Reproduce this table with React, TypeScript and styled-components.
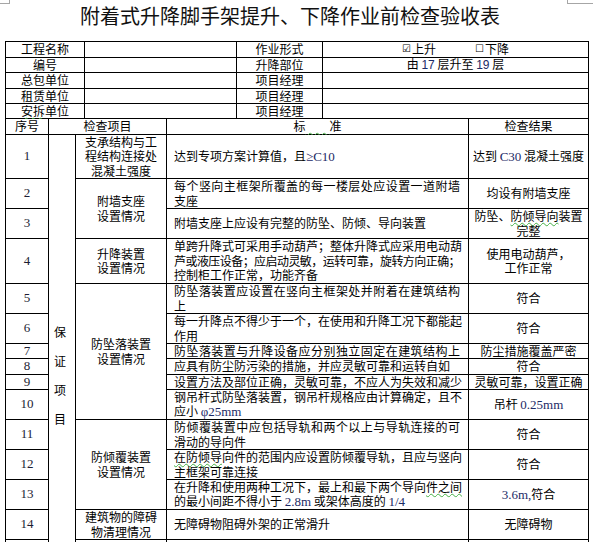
import React from 'react';
import styled, { createGlobalStyle } from 'styled-components';

const GlobalStyle = createGlobalStyle`
  html, body {
    margin: 0;
    padding: 0;
    overflow: hidden;
    background: #ffffff;
  }
  body {
    font-family: "Noto Sans CJK SC", "Noto Sans", sans-serif;
    color: #000000;
  }
`;

const Page = styled.div`
  position: relative;
  width: 593px;
  height: 542px;
  overflow: hidden;
  padding-left: 5px;
  box-sizing: border-box;
`;

const CornerMark = styled.div<{ $side: 'left' | 'right' }>`
  position: absolute;
  top: 0;
  ${(p) => (p.$side === 'left' ? 'left: 0; width: 9px; border-right: 1px solid #a6a6a6;' : 'left: 567px; width: 26px; border-left: 1px solid #a6a6a6;')}
  height: 3px;
  border-bottom: 1px solid #a6a6a6;
`;

const Title = styled.h1`
  margin: 0;
  height: 41px;
  box-sizing: border-box;
  padding: 6px 18px 0 0;
  font-size: 20px;
  line-height: 20px;
  font-weight: 400;
  text-align: center;
  color: #111111;
  white-space: nowrap;
`;

const Sheet = styled.div`
  display: grid;
  width: 584px;
  box-sizing: border-box;
  grid-template-columns: 42px 26px 8px 81px 69px 85px 145px 119px;
  grid-template-rows:
    15px 14px 15px 14px 14px 15px
    43px 29px 29px 44px 29px 29px 14px 15px 14px 29px 29px 29px 29px 29px 29px;
  gap: 1px;
  padding: 1px;
  background: #000000;
  font-size: 12px;
  line-height: 14.5px;
`;

const Cell = styled.div<{ $col: string; $row: string }>`
  grid-column: ${(p) => p.$col};
  grid-row: ${(p) => p.$row};
  background: #ffffff;
  display: flex;
  flex-direction: column;
  justify-content: center;
  align-items: center;
  text-align: center;
  white-space: nowrap;
  min-width: 0;
  min-height: 0;
`;

const StdCell = styled(Cell)`
  align-items: flex-start;
  text-align: left;
  padding-left: 7px;
`;

const NumCell = styled(Cell)`
  font-family: "Liberation Serif", "Times New Roman", serif;
  font-size: 13px;
  color: #1b1d33;
`;

const GroupCell = styled(Cell)`
  justify-content: flex-start;
  padding-top: 182px;
  padding-right: 4px;
  line-height: 29px;
`;

const Line = styled.span<{ $justify?: boolean; $tight?: boolean }>`
  display: block;
  ${(p) =>
    p.$justify
      ? 'width: 286px; text-align: justify; text-align-last: justify; text-justify: inter-character;'
      : ''}
  ${(p) => (p.$tight ? 'letter-spacing: -0.6px;' : '')}
`;

const Latin = styled.span<{ $serif?: boolean }>`
  font-family: ${(p) =>
    p.$serif ? '"Liberation Serif", "Times New Roman", serif' : '"Liberation Sans", Arial, sans-serif'};
  font-size: ${(p) => (p.$serif ? '13px' : '12px')};
  color: #1c2a66;
`;

const Squiggle = styled.span`
  text-decoration: underline wavy #46b046;
  text-decoration-thickness: 1px;
  text-underline-offset: 1px;
  white-space: pre;
`;

const ChoiceRow = styled.div`
  display: flex;
  gap: 39px;
`;

const Choice = styled.span`
  display: inline-flex;
  align-items: center;
`;

const Box = styled.span`
  font-family: "DejaVu Sans", sans-serif;
  font-size: 10px;
  margin-right: 1px;
`;

type HeaderRow = { label: React.ReactNode; label2: string; value2?: React.ReactNode };

const headerRows: HeaderRow[] = [
  {
    label: '工程名称',
    label2: '作业形式',
    value2: (
      <ChoiceRow>
        <Choice>
          <Box>☑</Box>上升
        </Choice>
        <Choice>
          <Box>☐</Box>下降
        </Choice>
      </ChoiceRow>
    ),
  },
  {
    label: '编号',
    label2: '升降部位',
    value2: (
      <span>
        由 <Latin>17</Latin> 层升至 <Latin>19</Latin> 层
      </span>
    ),
  },
  { label: '总包单位', label2: '项目经理' },
  { label: '租赁单位', label2: '项目经理' },
  {
    label: (
      <span>
        <Squiggle>安拆</Squiggle>单位
      </span>
    ),
    label2: '项目经理',
  },
];

type BodyRow = { n: string; std: React.ReactNode; res: React.ReactNode };

const bodyRows: BodyRow[] = [
  {
    n: '1',
    std: (
      <Line>
        达到专项方案计算值，且<Latin $serif>≥C10</Latin>
      </Line>
    ),
    res: (
      <span>
        达到 <Latin $serif>C30</Latin> 混凝土强度
      </span>
    ),
  },
  {
    n: '2',
    std: (
      <>
        <Line $justify>每个竖向主框架所覆盖的每一楼层处应设置一道附墙</Line>
        <Line>支座</Line>
      </>
    ),
    res: '均设有附墙支座',
  },
  {
    n: '3',
    std: <Line>附墙支座上应设有完整的防坠、防倾、导向装置</Line>,
    res: (
      <>
        <Line>
          防坠、<Squiggle>防倾导向</Squiggle>装置
        </Line>
        <Line>完整</Line>
      </>
    ),
  },
  {
    n: '4',
    std: (
      <>
        <Line $justify>单跨升降式可采用手动葫芦；整体升降式应采用电动葫</Line>
        <Line $justify $tight>
          芦或液压设备；应启动灵敏，运转可靠，旋转方向正确；
        </Line>
        <Line>控制柜工作正常，功能齐备</Line>
      </>
    ),
    res: (
      <>
        <Line>使用电动葫芦，</Line>
        <Line>工作正常</Line>
      </>
    ),
  },
  {
    n: '5',
    std: (
      <>
        <Line $justify>防坠落装置应设置在竖向主框架处并附着在建筑结构</Line>
        <Line>上</Line>
      </>
    ),
    res: '符合',
  },
  {
    n: '6',
    std: (
      <>
        <Line $justify>每一升降点不得少于一个，在使用和升降工况下都能起</Line>
        <Line>作用</Line>
      </>
    ),
    res: '符合',
  },
  {
    n: '7',
    std: <Line $justify>防坠落装置与升降设备应分别独立固定在建筑结构上</Line>,
    res: '防尘措施覆盖严密',
  },
  {
    n: '8',
    std: <Line>应具有防尘防污染的措施，并应灵敏可靠和运转自如</Line>,
    res: '符合',
  },
  {
    n: '9',
    std: <Line>设置方法及部位正确，灵敏可靠，不应人为失效和减少</Line>,
    res: '灵敏可靠，设置正确',
  },
  {
    n: '10',
    std: (
      <>
        <Line $justify>钢吊杆式防坠落装置，钢吊杆规格应由计算确定，且不</Line>
        <Line>
          应小 <Latin $serif>φ25mm</Latin>
        </Line>
      </>
    ),
    res: (
      <span>
        吊杆 <Latin $serif>0.25mm</Latin>
      </span>
    ),
  },
  {
    n: '11',
    std: (
      <>
        <Line $justify>防倾覆装置中应包括导轨和两个以上与导轨连接的可</Line>
        <Line>滑动的导向件</Line>
      </>
    ),
    res: '符合',
  },
  {
    n: '12',
    std: (
      <>
        <Line $justify>
          <Squiggle>在防倾导</Squiggle>向件的范围内应设置防倾覆导轨，且应与竖向
        </Line>
        <Line>主框架可靠连接</Line>
      </>
    ),
    res: '符合',
  },
  {
    n: '13',
    std: (
      <>
        <Line $justify>
          在升降和使用两种工况下，最上和最下两个导向<Squiggle>件之间</Squiggle>
        </Line>
        <Line>
          的最小间距不得小于 <Latin $serif>2.8m</Latin> 或架体高度的 <Latin $serif>1/4</Latin>
        </Line>
      </>
    ),
    res: (
      <span>
        <Latin $serif>3.6m,</Latin>符合
      </span>
    ),
  },
  {
    n: '14',
    std: <Line>无障碍物阻碍外架的正常滑升</Line>,
    res: '无障碍物',
  },
];

type Item = { lines: string[]; start: number; span: number };

const items: Item[] = [
  { lines: ['支承结构与工', '程结构连接处', '混凝土强度'], start: 7, span: 1 },
  { lines: ['附墙支座', '设置情况'], start: 8, span: 2 },
  { lines: ['升降装置', '设置情况'], start: 10, span: 1 },
  { lines: ['防坠落装置', '设置情况'], start: 11, span: 6 },
  { lines: ['防倾覆装置', '设置情况'], start: 17, span: 3 },
  { lines: ['建筑物的障碍', '物清理情况'], start: 20, span: 1 },
  { lines: [], start: 21, span: 1 },
];

export default function App() {
  return (
    <Page>
      <GlobalStyle />
      <CornerMark $side="left" />
      <CornerMark $side="right" />
      <Title>附着式升降脚手架提升、下降作业前检查验收表</Title>
      <Sheet>
        {headerRows.map((h, i) => (
          <React.Fragment key={`h${i}`}>
            <Cell $col="1 / 4" $row={`${i + 1}`}>{h.label}</Cell>
            <Cell $col="4 / 6" $row={`${i + 1}`} />
            <Cell $col="6 / 7" $row={`${i + 1}`}>{h.label2}</Cell>
            <Cell $col="7 / 9" $row={`${i + 1}`}>{h.value2}</Cell>
          </React.Fragment>
        ))}
        <Cell $col="1 / 2" $row="6">序号</Cell>
        <Cell $col="2 / 5" $row="6">检查项目</Cell>
        <Cell $col="5 / 8" $row="6">
          <span>
            标<Squiggle>{'\u3000\u3000'}</Squiggle>准
          </span>
        </Cell>
        <Cell $col="8 / 9" $row="6">检查结果</Cell>

        <GroupCell $col="2 / 3" $row="7 / 22">
          <span>保</span>
          <span>证</span>
          <span>项</span>
          <span>目</span>
        </GroupCell>

        {items.map((it, i) => (
          <Cell key={`it${i}`} $col="3 / 5" $row={`${it.start} / span ${it.span}`}>
            {it.lines.map((l, j) => (
              <Line key={j}>{l}</Line>
            ))}
          </Cell>
        ))}

        {bodyRows.map((r, i) => (
          <React.Fragment key={`b${i}`}>
            <NumCell $col="1 / 2" $row={`${i + 7}`}>{r.n}</NumCell>
            <StdCell $col="5 / 8" $row={`${i + 7}`}>{r.std}</StdCell>
            <Cell $col="8 / 9" $row={`${i + 7}`}>{r.res}</Cell>
          </React.Fragment>
        ))}
        <NumCell $col="1 / 2" $row="21" />
        <StdCell $col="5 / 8" $row="21" />
        <Cell $col="8 / 9" $row="21" />
      </Sheet>
    </Page>
  );
}
